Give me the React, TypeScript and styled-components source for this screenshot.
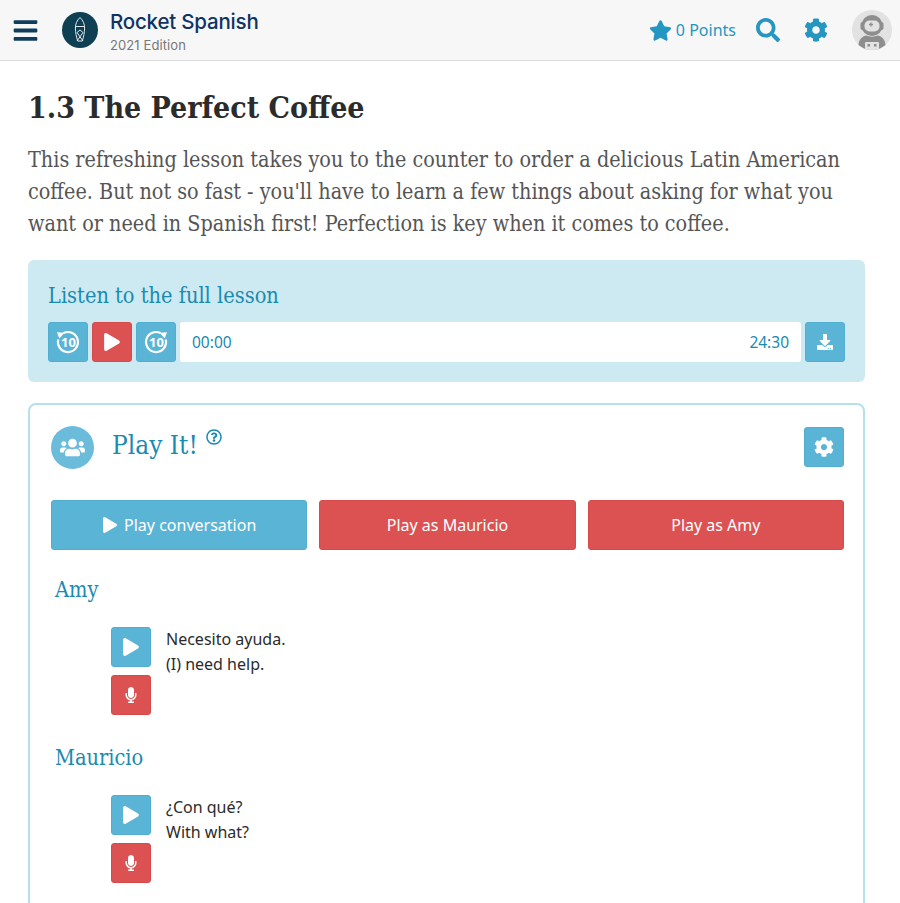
import React from 'react';
import styled, { createGlobalStyle } from 'styled-components';
import { FaBars, FaStar, FaSearch, FaCog, FaUsers, FaPlay, FaMicrophone, FaDownload, FaRegQuestionCircle } from 'react-icons/fa';

const serif = `"DejaVu Serif Condensed", "DejaVu Serif", serif`;
const sans = `"Noto Sans", "Open Sans", sans-serif`;
const blue = '#5ab4d6';
const red = '#dc5252';
const teal = '#1a8ab0';

const GlobalStyle = createGlobalStyle`
  html, body {
    margin: 0;
    padding: 0;
    background: #fff;
    font-family: ${sans};
  }
`;

const Page = styled.div`
  height: 903px;
  overflow: hidden;
`;

const Header = styled.header`
  display: flex;
  align-items: center;
  height: 60px;
  padding: 0 8px 0 12px;
  background: #f7f7f7;
  border-bottom: 1px solid #dcdcdc;
`;

const Burger = styled.div`
  display: flex;
  color: #0f3d5c;
  font-size: 27px;
  margin-right: 23px;
`;

const Logo = styled.svg`
  width: 36px;
  height: 36px;
  margin-right: 12px;
`;

const Brand = styled.div`
  display: flex;
  flex-direction: column;
  flex: 1;
  padding-top: 2px;
`;

const BrandName = styled.div`
  font-family: Inter, sans-serif;
  font-size: 20.5px;
  font-weight: 500;
  line-height: 26px;
  letter-spacing: -0.2px;
  color: #0f3463;
`;

const BrandEdition = styled.div`
  font-family: Inter, sans-serif;
  font-size: 13px;
  line-height: 17px;
  margin-top: 2px;
  letter-spacing: 0.1px;
  color: #777;
`;

const Points = styled.div`
  display: flex;
  align-items: center;
  gap: 4px;
  color: #2596c1;
  font-size: 16px;
  margin-right: 20px;
`;

const HeaderIcon = styled.div`
  display: flex;
  color: #2596c1;
  font-size: 24px;
  margin-right: 24px;
`;

const Avatar = styled.svg`
  width: 40px;
  height: 40px;
`;

const Content = styled.main`
  padding: 28px 35px 0 28px;
`;

const Title = styled.h1`
  margin: 0;
  font-family: ${serif};
  font-size: 30px;
  line-height: 38px;
  font-weight: 700;
  color: #2b2b2b;
`;

const Intro = styled.p`
  margin: 17px 0 20px;
  font-family: ${serif};
  font-size: 21.4px;
  line-height: 32px;
  color: #555;
`;

const AudioPanel = styled.section`
  background: #cdeaf3;
  border-radius: 6px;
  padding: 21px 20px 20px;
  height: 122px;
  box-sizing: border-box;
`;

const AudioTitle = styled.h2`
  margin: 0 0 11px;
  font-family: ${serif};
  font-size: 21.6px;
  line-height: 30px;
  font-weight: 400;
  color: ${teal};
`;

const AudioRow = styled.div`
  display: flex;
  gap: 4px;
`;

const IconButton = styled.button<{ $red?: boolean; $size?: number }>`
  display: flex;
  align-items: center;
  justify-content: center;
  flex: none;
  width: 40px;
  height: 40px;
  padding: 0;
  border: 1px solid ${p => (p.$red ? '#d64a4a' : '#52aed1')};
  border-radius: 3px;
  background: ${p => (p.$red ? red : blue)};
  color: #fff;
  font-size: ${p => p.$size ?? 18}px;
`;

const TimeBar = styled.div`
  flex: 1;
  display: flex;
  align-items: center;
  justify-content: space-between;
  padding: 0 12px;
  background: #fff;
  border-radius: 3px;
  font-size: 15.5px;
  color: ${teal};
`;

const SkipSvg = styled.svg`
  width: 28px;
  height: 28px;
`;

const SkipLabel = styled.text`
  font-family: ${sans};
  font-size: 13px;
  font-weight: 700;
  fill: #fff;
  text-anchor: middle;
`;

const Card = styled.section`
  margin-top: 21px;
  border: 2px solid #b5e1ed;
  border-radius: 8px;
  padding: 21px 19px 40px 21px;
  height: 700px;
`;

const CardHeader = styled.div`
  display: flex;
  align-items: center;
  height: 42px;
`;

const CircleIcon = styled.div`
  display: flex;
  align-items: center;
  justify-content: center;
  width: 43px;
  height: 43px;
  border-radius: 50%;
  background: #6bbbdb;
  color: #fff;
  font-size: 25px;
  margin-right: 18px;
`;

const CardTitle = styled.h2`
  margin: 0 0 4px;
  flex: 1;
  display: flex;
  font-family: ${serif};
  font-size: 26px;
  font-weight: 400;
  color: ${teal};
`;

const Help = styled.span`
  display: flex;
  font-size: 16px;
  margin: -1px 0 0 8px;
`;

const PlayButtons = styled.div`
  display: grid;
  grid-template-columns: repeat(3, 1fr);
  gap: 12px;
  margin-top: 32px;
`;

const PlayButton = styled.button<{ $red?: boolean }>`
  display: flex;
  align-items: center;
  justify-content: center;
  gap: 6px;
  height: 50px;
  padding: 0;
  border: 1px solid ${p => (p.$red ? '#d64a4a' : '#52aed1')};
  border-radius: 3px;
  background: ${p => (p.$red ? red : blue)};
  color: #fff;
  font-family: ${sans};
  font-size: 16px;
`;

const Speaker = styled.h3`
  margin: 25px 0 22px 4px;
  font-family: ${serif};
  font-size: 21.6px;
  line-height: 30px;
  font-weight: 400;
  color: ${teal};
`;

const Line = styled.div`
  display: flex;
  margin: 0 0 28px 60px;
  gap: 15px;
`;

const LineButtons = styled.div`
  display: flex;
  flex-direction: column;
  gap: 8px;
`;

const LineText = styled.div`
  font-size: 16px;
  line-height: 25px;
  color: #2b2b2b;
`;

const SkipIcon = ({ forward }: { forward?: boolean }) => (
  <SkipSvg viewBox="0 0 28 28">
    <g transform={forward ? 'translate(28 0) scale(-1 1)' : undefined}>
      <path d="M9.500 5.100A10 10 0 1 1 4.300 11.500" fill="none" stroke="#fff" strokeWidth="2.200" />
      <path d="M3 4.200l7.500 .6-5.200 5.600z" fill="#fff" />
    </g>
    <SkipLabel x="14.500" y="19">10</SkipLabel>
  </SkipSvg>
);

const LineBlock = ({ es, en }: { es: string; en: string }) => (
  <Line>
    <LineButtons>
      <IconButton><FaPlay /></IconButton>
      <IconButton $red $size={16}><FaMicrophone /></IconButton>
    </LineButtons>
    <LineText>
      {es}
      <br />
      {en}
    </LineText>
  </Line>
);

const App: React.FC = () => (
  <Page>
    <GlobalStyle />
    <Header>
      <Burger><FaBars /></Burger>
      <Logo viewBox="0 0 36 36">
        <circle cx="18" cy="18" r="18" fill="#0f3f52" />
        <g fill="none" stroke="#dfe8ec" strokeWidth="1">
          <path d="M18 5.500c-3.200 3-4.600 6.600-4.600 10.500 0 4.600 1.100 9 2.300 13h4.600c1.200-4 2.300-8.400 2.300-13 0-3.900-1.400-7.500-4.600-10.500z" />
          <path d="M14 14.500h8M15 29l6-8.500-3-2.500-3 2.500 6 8.500" />
        </g>
      </Logo>
      <Brand>
        <BrandName>Rocket Spanish</BrandName>
        <BrandEdition>2021 Edition</BrandEdition>
      </Brand>
      <Points><FaStar size={23} /> 0 Points</Points>
      <HeaderIcon><FaSearch /></HeaderIcon>
      <HeaderIcon><FaCog /></HeaderIcon>
      <Avatar viewBox="0 0 40 40">
        <circle cx="20" cy="20" r="20" fill="#e2e2e2" />
        <rect x="8.500" y="12" width="23" height="8" rx="2" fill="#8e8e8e" />
        <circle cx="20" cy="15.500" r="10.500" fill="#8e8e8e" />
        <rect x="12.500" y="10.500" width="15" height="11" rx="5" fill="#e2e2e2" />
        <path d="M17 14.500h4M19 12.500v4" stroke="#8e8e8e" strokeWidth="1.300" />
        <path d="M6.500 35c.5-6 4-9 8-9.500 3 1.500 8 1.500 11 0 4 .5 7.500 3.500 8 9.500-3.500 3-8.500 5-13.500 5s-10-2-13.500-5z" fill="#8e8e8e" />
        <rect x="13" y="32" width="14" height="8" rx="1" fill="#e2e2e2" />
        <rect x="15.500" y="34" width="2.500" height="2.500" fill="#8e8e8e" />
        <rect x="22" y="34" width="2.500" height="2.500" fill="#8e8e8e" />
      </Avatar>
    </Header>
    <Content>
      <Title>1.3 The Perfect Coffee</Title>
      <Intro>
        This refreshing lesson takes you to the counter to order a delicious Latin American coffee. But not so fast - you'll have to learn a few things about asking for what you want or need in Spanish first! Perfection is key when it comes to coffee.
      </Intro>
      <AudioPanel>
        <AudioTitle>Listen to the full lesson</AudioTitle>
        <AudioRow>
          <IconButton><SkipIcon /></IconButton>
          <IconButton $red><FaPlay /></IconButton>
          <IconButton><SkipIcon forward /></IconButton>
          <TimeBar><span>00:00</span><span>24:30</span></TimeBar>
          <IconButton $size={16}><FaDownload /></IconButton>
        </AudioRow>
      </AudioPanel>
      <Card>
        <CardHeader>
          <CircleIcon><FaUsers /></CircleIcon>
          <CardTitle>
            Play It!
            <Help><FaRegQuestionCircle /></Help>
          </CardTitle>
          <IconButton $size={20}><FaCog /></IconButton>
        </CardHeader>
        <PlayButtons>
          <PlayButton><FaPlay /> Play conversation</PlayButton>
          <PlayButton $red>Play as Mauricio</PlayButton>
          <PlayButton $red>Play as Amy</PlayButton>
        </PlayButtons>
        <Speaker>Amy</Speaker>
        <LineBlock es="Necesito ayuda." en="(I) need help." />
        <Speaker>Mauricio</Speaker>
        <LineBlock es="¿Con qué?" en="With what?" />
      </Card>
    </Content>
  </Page>
);

export default App;
